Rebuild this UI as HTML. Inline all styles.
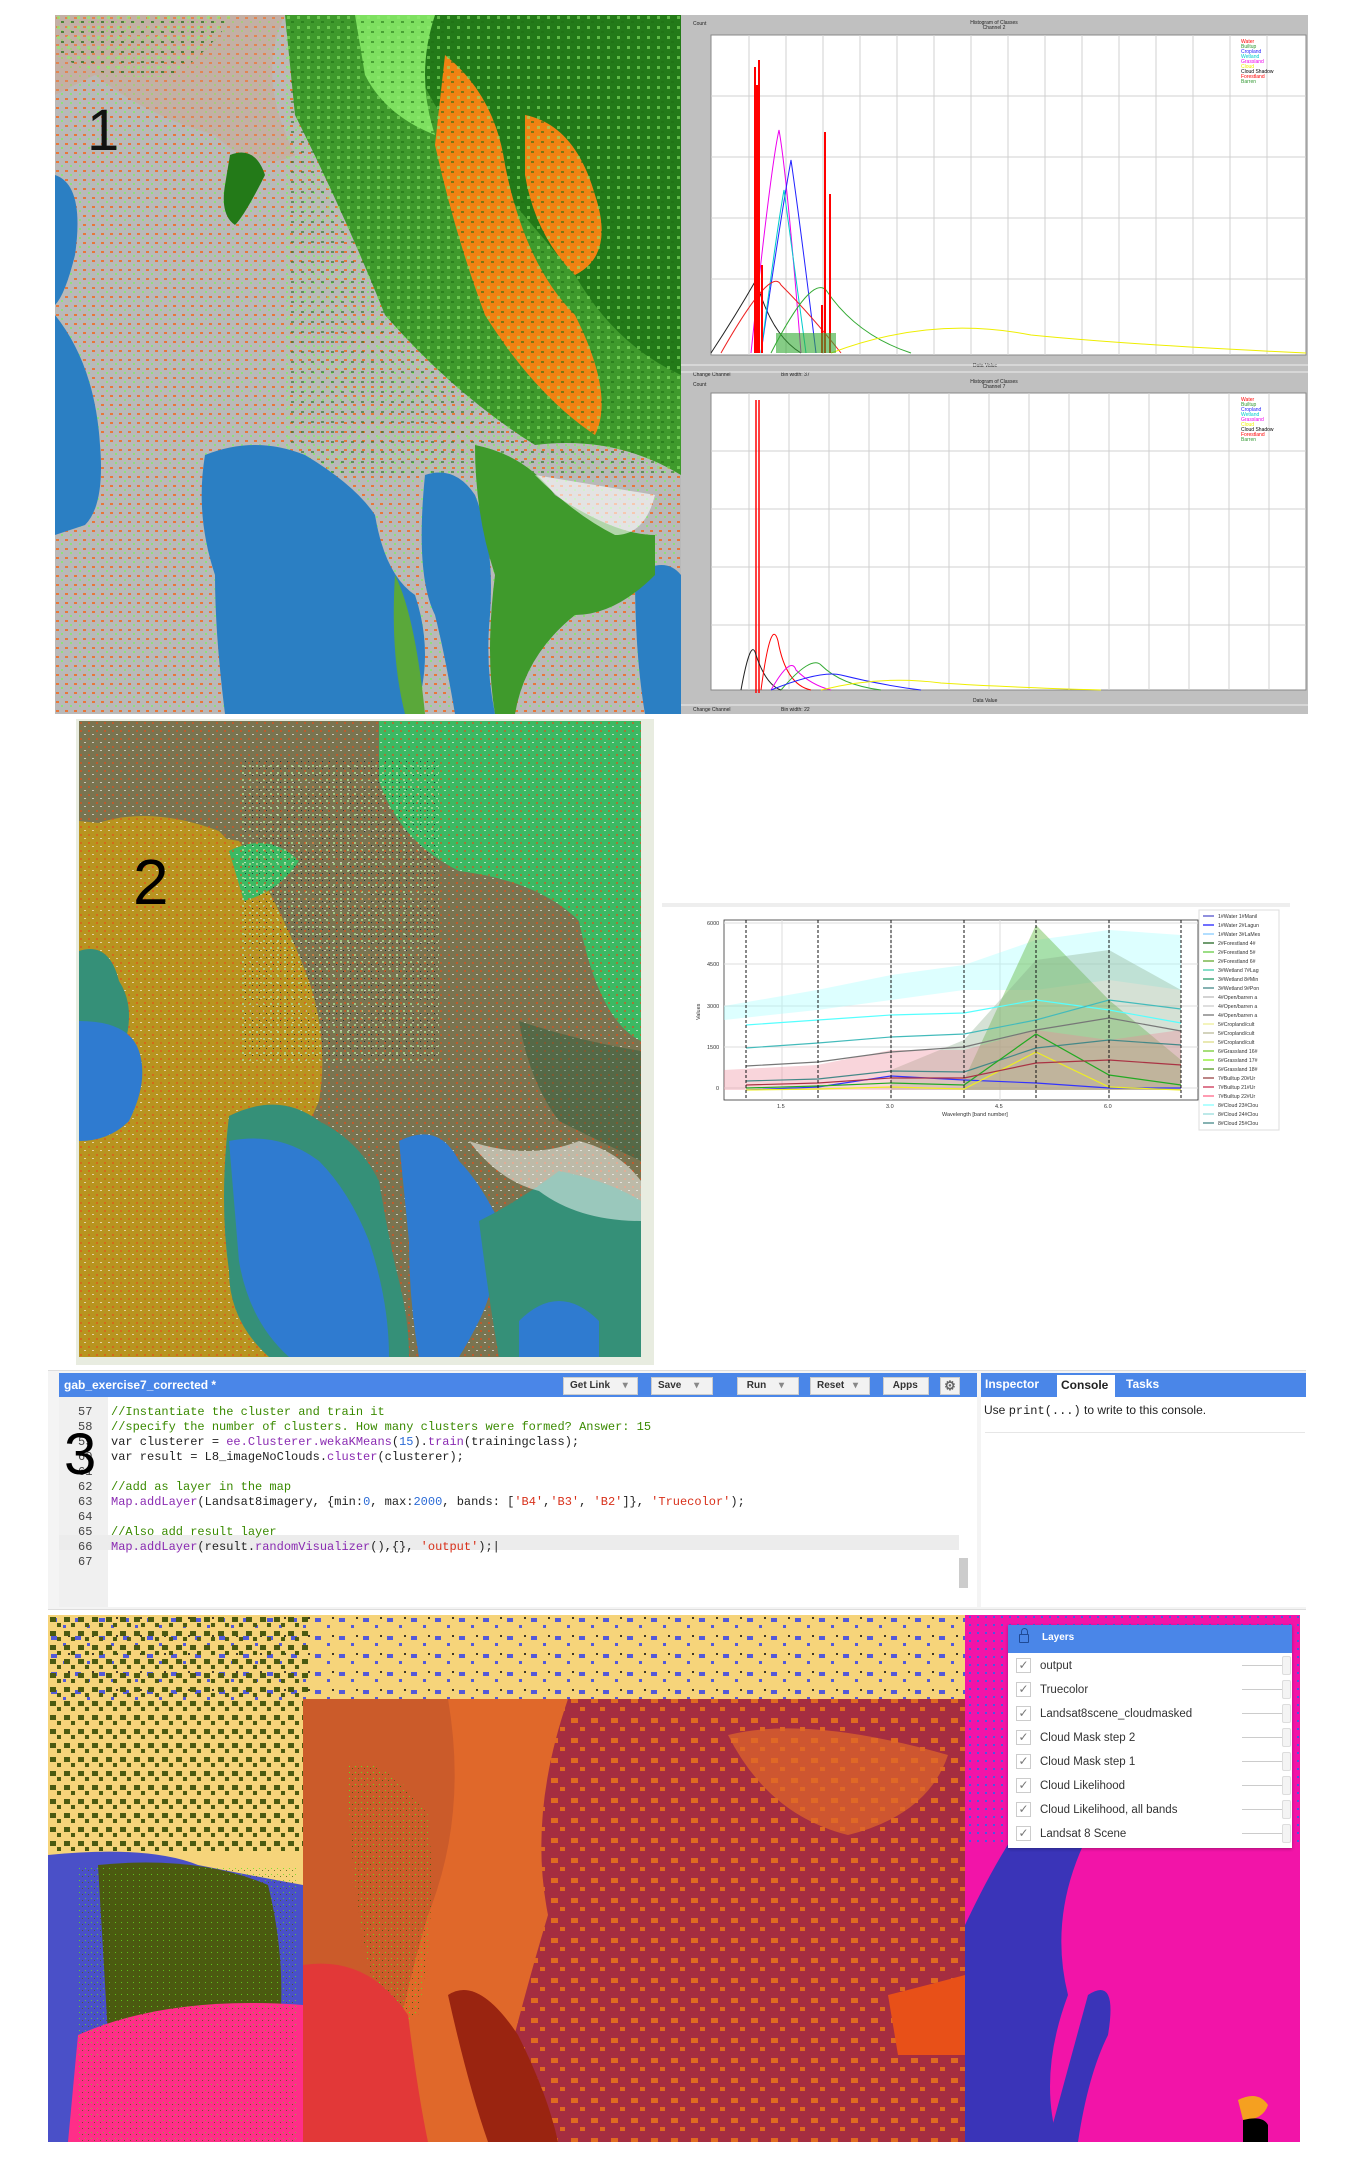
<!DOCTYPE html>
<html><head><meta charset="utf-8"><style>
*{margin:0;padding:0;box-sizing:border-box}
body{width:1354px;height:2158px;background:#fff;position:relative;overflow:hidden;font-family:"Liberation Sans",sans-serif}
.abs{position:absolute}
.code{font-family:"Liberation Mono",monospace;font-size:12px;line-height:15px;white-space:pre}
.cm{color:#3a8a00}.fn{color:#8a2bb2}.num{color:#2c6bd6}.str{color:#d8301a}
.btn{position:absolute;top:4px;height:18px;background:#f2f2f2;border:1px solid #ccc;font-size:10px;font-weight:bold;color:#333;line-height:16px;padding-left:6px}
.lr{position:absolute;left:8px;height:24px;font-size:11.5px;color:#333;line-height:24px;width:276px}
.lr .cb{position:absolute;left:0;top:4px;width:15px;height:15px;border:1px solid #ccc;color:#777;font-size:12px;line-height:13px;text-align:center}
.lr .t{position:absolute;left:24px}
.lr .sl{position:absolute;left:226px;top:11px;width:40px;height:1px;background:#ccc}
.lr .kn{position:absolute;left:266px;top:2px;width:9px;height:19px;border:1px solid #ddd;background:#f4f4f4;border-radius:2px}
</style></head><body>

<!-- MAP 1 -->
<svg class="abs" style="left:55px;top:15px" width="626" height="699" viewBox="0 0 626 699">
<defs>
<pattern id="sp1" width="9" height="9" patternUnits="userSpaceOnUse"><rect x="1" y="2" width="3" height="2" fill="#e8773a"/><rect x="6" y="6" width="2" height="2" fill="#8ee07a"/></pattern>
<pattern id="sp2" width="10" height="10" patternUnits="userSpaceOnUse"><rect x="2" y="1" width="3" height="3" fill="#90ee70"/><rect x="6" y="6" width="3" height="2" fill="#1d6d12"/></pattern>
</defs>
<rect width="626" height="699" fill="#b9b9b9"/>
<rect width="626" height="699" fill="url(#sp1)"/>
<path d="M230 0H626V460Q560 420 480 430Q400 380 330 300Q290 200 240 100Z" fill="#3f9a2c"/>
<path d="M330 0H626V360Q560 330 520 260Q450 180 380 90Z" fill="#237a18"/>
<path d="M390 40Q440 80 450 150Q470 250 520 300Q560 380 540 420Q480 380 430 300Q400 220 380 130Z" fill="#f08212"/>
<path d="M470 100Q520 110 540 180Q560 240 520 260Q480 220 470 160Z" fill="#f08212"/>
<path d="M300 0H380Q360 60 380 120Q330 100 310 60Z" fill="#7ee060"/>
<rect x="230" y="0" width="396" height="460" fill="url(#sp2)" opacity=".55"/>
<path d="M0 0H230Q200 60 240 140Q200 160 160 120Q90 100 40 60L0 80Z" fill="#d8a080" opacity=".35"/>
<path d="M0 0H180Q150 40 120 60Q60 70 0 40Z" fill="url(#sp2)" opacity=".7"/>
<path d="M0 300Q40 350 45 430Q50 490 30 510L0 520Z" fill="#2b7fc3"/>
<path d="M0 160Q30 170 20 240Q10 280 0 290Z" fill="#2b7fc3"/>
<path d="M175 140Q200 130 210 160Q190 200 180 210Q165 200 170 170Z" fill="#237a18"/>
<path d="M150 440Q200 420 250 440Q300 470 320 500Q330 560 360 580Q380 640 360 699H170Q160 620 160 560Q140 500 150 440Z" fill="#2b7fc3"/>
<path d="M370 460Q400 450 420 480Q440 530 435 600Q430 650 440 699H400Q390 640 380 600Q360 560 370 460Z" fill="#2b7fc3"/>
<path d="M580 560Q610 540 626 560V699H590Q580 640 580 560Z" fill="#2b7fc3"/>
<path d="M420 430Q470 440 500 480Q560 520 600 520V560Q560 600 520 600Q470 640 460 699H440Q430 640 440 560Q420 500 420 430Z" fill="#3f9a2c"/>
<path d="M340 560Q360 600 370 699H350Q335 640 340 560Z" fill="#5aa83a"/>
<path d="M480 460Q540 470 600 480Q590 520 560 520Q520 500 480 460Z" fill="#fff" opacity=".6"/>
<text x="32" y="135" font-family="Liberation Sans,sans-serif" font-size="58" fill="#111">1</text>
</svg>

<!-- HISTOGRAMS -->
<div class="abs" style="left:681px;top:15px;width:627px;height:699px;background:#c0c0c0"></div>
<svg class="abs" style="left:681px;top:15px" width="627" height="699" viewBox="0 0 627 699" font-family="Liberation Sans,sans-serif">
<g font-size="5" fill="#222" text-anchor="middle"><text x="313" y="9">Histogram of Classes</text><text x="313" y="14">Channel 2</text>
<text x="313" y="368">Histogram of Classes</text><text x="313" y="373">Channel 7</text></g>
<rect x="30" y="20" width="595" height="320" fill="#fff" stroke="#888"/>
<rect x="30" y="378" width="595" height="297" fill="#fff" stroke="#888"/>
<g stroke="#d0d0d0" stroke-width="1">
<path d="M68 20V340M105 20V340M142 20V340M179 20V340M216 20V340M253 20V340M290 20V340M327 20V340M364 20V340M401 20V340M438 20V340M475 20V340M512 20V340M549 20V340M586 20V340M30 81H625M30 142H625M30 203H625M30 264H625"/>
<path d="M68 378V675M108 378V675M148 378V675M188 378V675M228 378V675M268 378V675M308 378V675M348 378V675M388 378V675M428 378V675M468 378V675M508 378V675M548 378V675M588 378V675M30 436H625M30 494H625M30 552H625M30 610H625"/>
</g>
<g fill="none" stroke-width="1">
<path d="M30 338Q55 300 75 265Q90 320 120 338" stroke="#222"/>
<path d="M70 338Q90 150 98 115Q106 160 120 338" stroke="#e0e"/>
<path d="M80 338Q100 200 110 145Q118 200 135 338" stroke="#22f"/>
<path d="M80 338Q95 220 103 175Q112 240 125 338" stroke="#0cc"/>
<path d="M40 338Q90 250 100 270Q130 300 160 338" stroke="#e22"/>
<path d="M90 338Q130 260 145 275Q175 320 230 338" stroke="#3a3"/>
<path d="M150 338Q250 300 350 320Q450 330 625 338" stroke="#ee0"/>
</g>
<g fill="#f00"><rect x="73" y="52" width="2" height="286"/><rect x="77" y="45" width="2" height="293"/><rect x="75" y="70" width="2" height="268"/><rect x="143" y="117" width="2" height="221"/><rect x="148" y="179" width="2" height="159"/><rect x="140" y="290" width="2" height="48"/><rect x="80" y="250" width="2" height="88"/></g>
<rect x="95" y="318" width="60" height="20" fill="#3a3" opacity=".6"/>
<path d="M75 678V385M78 678V385" stroke="#f00" stroke-width="1.5"/>
<g fill="none" stroke-width="1">
<path d="M60 675Q70 620 75 640Q85 670 100 675" stroke="#222"/>
<path d="M80 675Q90 600 97 626Q105 670 130 675" stroke="#f00"/>
<path d="M90 675Q110 640 115 655Q130 670 150 675" stroke="#e0e"/>
<path d="M100 675Q130 640 140 650Q160 670 200 675" stroke="#3a3"/>
<path d="M90 675Q140 655 160 660Q200 670 240 675" stroke="#22f"/>
<path d="M140 675Q200 660 260 668Q320 672 420 675" stroke="#ee0"/>
</g>
<g font-size="5" fill="#222"><text x="12" y="10">Count</text><text x="12" y="371">Count</text>
<text x="292" y="352">Data Value</text><text x="292" y="687">Data Value</text>
<text x="12" y="361">Change Channel</text><text x="12" y="696">Change Channel</text>
<text x="100" y="361">Bin width: 37</text><text x="100" y="696">Bin width: 22</text></g>
<g font-size="5"><text x="560" y="28" fill="#f00">Water</text><text x="560" y="33" fill="#393">Builtup</text><text x="560" y="38" fill="#22f">Cropland</text><text x="560" y="43" fill="#0cc">Wetland</text><text x="560" y="48" fill="#e0e">Grassland</text><text x="560" y="53" fill="#ee0">Cloud</text><text x="560" y="58" fill="#000">Cloud Shadow</text><text x="560" y="63" fill="#f00">Forestland</text><text x="560" y="68" fill="#393">Barren</text>
<text x="560" y="386" fill="#f00">Water</text><text x="560" y="391" fill="#393">Builtup</text><text x="560" y="396" fill="#22f">Cropland</text><text x="560" y="401" fill="#0cc">Wetland</text><text x="560" y="406" fill="#e0e">Grassland</text><text x="560" y="411" fill="#ee0">Cloud</text><text x="560" y="416" fill="#000">Cloud Shadow</text><text x="560" y="421" fill="#f00">Forestland</text><text x="560" y="426" fill="#393">Barren</text></g>
<path d="M0 350H627M0 357H627M0 690H627" stroke="#eee"/>
</svg>

<!-- MAP 2 -->
<div class="abs" style="left:76px;top:719px;width:578px;height:646px;background:#e8ece0"></div>
<svg class="abs" style="left:79px;top:721px" width="562" height="636" viewBox="0 0 562 636">
<defs><pattern id="sp3" width="8" height="8" patternUnits="userSpaceOnUse"><rect x="1" y="1" width="2" height="2" fill="#e84a18"/><rect x="5" y="5" width="2" height="1" fill="#fff"/></pattern>
<pattern id="sp4" width="7" height="7" patternUnits="userSpaceOnUse"><rect x="2" y="2" width="2" height="2" fill="#a8d890"/><rect x="5" y="5" width="1" height="1" fill="#123"/></pattern></defs>
<rect width="562" height="636" fill="#7a7450"/>
<path d="M0 100Q100 110 160 120Q200 180 230 260Q250 320 240 380Q200 470 160 540Q140 600 200 636H0Z" fill="#b89420"/>
<path d="M0 110Q60 80 140 110Q180 150 200 220L140 250L0 240Z" fill="#b89420"/>
<path d="M300 0H562V320Q520 300 500 200Q460 160 380 150Q320 120 300 60Z" fill="#3cb963"/>
<path d="M150 130Q190 110 220 140Q200 170 165 180Z" fill="#3cb963"/>
<rect x="160" y="40" width="200" height="300" fill="url(#sp4)" opacity=".8"/>
<rect width="562" height="636" fill="url(#sp3)" opacity=".6"/>
<path d="M0 230Q30 220 40 260Q60 290 40 340Q20 360 0 350Z" fill="#359078"/>
<path d="M0 300Q50 300 60 330Q70 360 50 400Q30 420 0 420Z" fill="#2f7bd0"/>
<path d="M150 395Q200 370 240 400Q280 420 300 460Q310 520 320 560Q330 600 330 636H190Q150 600 150 550Q140 480 150 395Z" fill="#359078"/>
<path d="M150 420Q200 410 240 440Q270 470 290 520Q310 580 310 636H210Q170 600 160 540Z" fill="#2f7bd0"/>
<path d="M320 420Q360 400 380 440Q400 460 420 500Q420 560 400 600Q390 620 380 636H340Q330 580 330 520Z" fill="#2f7bd0"/>
<path d="M400 500Q440 480 480 450Q530 460 562 480V636H420Q410 580 400 500Z" fill="#359078"/>
<path d="M440 600Q480 560 520 600V636H440Z" fill="#2f7bd0"/>
<path d="M390 420Q450 440 500 420Q540 430 562 460V500Q500 500 460 470Q420 460 390 420Z" fill="#fff" opacity=".5"/>
<path d="M440 300Q500 320 562 330V440Q520 420 480 400Q450 360 440 300Z" fill="#1f5a3a" opacity=".4"/>
<text x="54" y="183" font-family="Liberation Sans,sans-serif" font-size="64" fill="#000">2</text>
</svg>

<!-- SPECTRAL CHART -->
<div class="abs" style="left:662px;top:903px;width:628px;height:4px;background:#eee"></div>
<svg class="abs" style="left:662px;top:907px" width="628" height="230" viewBox="662 907 628 230" font-family="Liberation Sans,sans-serif">
<rect x="724" y="920" width="474" height="180" fill="#fff" stroke="#333" stroke-width="0.8"/>
<g stroke="#ddd"><path d="M782 920V1100M891 920V1100M1000 920V1100M1109 920V1100M724 923H1198M724 964H1198M724 1006H1198M724 1047H1198M724 1088H1198"/></g>
<path d="M724 1006L817 990L891 975L964 965L1036 940L1109 930L1181 935V990L1109 980L1036 990L964 990L891 1000L817 1010L724 1020Z" fill="#aff" opacity=".4"/>
<path d="M964 1080L1036 925L1109 1000L1181 1060V1090H964Z" fill="#6b4" opacity=".45"/>
<path d="M891 1070L964 1040L1036 960L1109 950L1181 990V1090H891Z" fill="#8a8" opacity=".35"/>
<path d="M724 1070L817 1065L891 1050L964 1050L1036 1030L1109 1040L1181 1030V1090H724Z" fill="#e89" opacity=".35"/>
<g fill="none" stroke-width="1.2">
<path d="M746 1025L818 1020L891 1015L964 1013L1036 1000L1109 1010L1181 1023" stroke="#5ff"/>
<path d="M746 1048L818 1043L891 1037L964 1034L1036 1020L1109 1000L1181 1009" stroke="#4bb"/>
<path d="M746 1066L818 1062L891 1052L964 1047L1036 1030L1109 1018L1181 1031" stroke="#777"/>
<path d="M746 1081L818 1079L891 1071L964 1072L1036 1048L1109 1040L1181 1045" stroke="#488"/>
<path d="M746 1090L818 1087L891 1076L964 1080L1036 1083L1109 1088L1181 1088" stroke="#33f"/>
<path d="M746 1090L818 1089L891 1087L964 1089L1036 1052L1109 1087L1181 1090" stroke="#ee2"/>
<path d="M746 1088L818 1086L891 1083L964 1085L1036 1034L1109 1075L1181 1085" stroke="#2a2"/>
<path d="M746 1085L818 1083L891 1078L964 1078L1036 1063L1109 1060L1181 1065" stroke="#a34"/>
</g>
<g stroke="#111" stroke-dasharray="3,2"><path d="M746 920V1100M818 920V1100M891 920V1100M964 920V1100M1036 920V1100M1109 920V1100M1181 920V1100"/></g>
<g font-size="5.5" fill="#333"><text x="707" y="925">6000</text><text x="707" y="966">4500</text><text x="707" y="1008">3000</text><text x="707" y="1049">1500</text><text x="716" y="1090">0</text>
<text x="777" y="1108">1.5</text><text x="886" y="1108">3.0</text><text x="995" y="1108">4.5</text><text x="1104" y="1108">6.0</text>
<text x="942" y="1116">Wavelength [band number]</text>
<text x="700" y="1020" transform="rotate(-90 700 1020)">Values</text></g>
<rect x="1199" y="910" width="80" height="220" fill="#fff" stroke="#ddd"/>
<g font-size="5.2" fill="#333">
<text x="1218" y="918">1#Water 1#Manil</text><text x="1218" y="927">1#Water 2#Lagun</text><text x="1218" y="936">1#Water 3#LaMes</text><text x="1218" y="945">2#Forestland 4#</text><text x="1218" y="954">2#Forestland 5#</text><text x="1218" y="963">2#Forestland 6#</text><text x="1218" y="972">3#Wetland 7#Lag</text><text x="1218" y="981">3#Wetland 8#Min</text><text x="1218" y="990">3#Wetland 9#Pon</text><text x="1218" y="999">4#Open/barren a</text><text x="1218" y="1008">4#Open/barren a</text><text x="1218" y="1017">4#Open/barren a</text><text x="1218" y="1026">5#Cropland/cult</text><text x="1218" y="1035">5#Cropland/cult</text><text x="1218" y="1044">5#Cropland/cult</text><text x="1218" y="1053">6#Grassland 16#</text><text x="1218" y="1062">6#Grassland 17#</text><text x="1218" y="1071">6#Grassland 18#</text><text x="1218" y="1080">7#Builtup 20#Ur</text><text x="1218" y="1089">7#Builtup 21#Ur</text><text x="1218" y="1098">7#Builtup 22#Ur</text><text x="1218" y="1107">8#Cloud 23#Clou</text><text x="1218" y="1116">8#Cloud 24#Clou</text><text x="1218" y="1125">8#Cloud 25#Clou</text></g>
<g stroke-width="1.3"><path d="M1203 916H1214" stroke="#55c"/><path d="M1203 925H1214" stroke="#22f"/><path d="M1203 934H1214" stroke="#8cf"/><path d="M1203 943H1214" stroke="#262"/><path d="M1203 952H1214" stroke="#6c4"/><path d="M1203 961H1214" stroke="#6a3"/><path d="M1203 970H1214" stroke="#4ca"/><path d="M1203 979H1214" stroke="#296"/><path d="M1203 988H1214" stroke="#488"/><path d="M1203 997H1214" stroke="#bbb"/><path d="M1203 1006H1214" stroke="#ccc"/><path d="M1203 1015H1214" stroke="#777"/><path d="M1203 1024H1214" stroke="#ee9"/><path d="M1203 1033H1214" stroke="#bb9"/><path d="M1203 1042H1214" stroke="#dd8"/><path d="M1203 1051H1214" stroke="#7c3"/><path d="M1203 1060H1214" stroke="#8e2"/><path d="M1203 1069H1214" stroke="#592"/><path d="M1203 1078H1214" stroke="#944"/><path d="M1203 1087H1214" stroke="#c35"/><path d="M1203 1096H1214" stroke="#f68"/><path d="M1203 1105H1214" stroke="#8ff"/><path d="M1203 1114H1214" stroke="#9dd"/><path d="M1203 1123H1214" stroke="#488"/></g>
</svg>

<!-- EDITOR -->
<div class="abs" style="left:48px;top:1370px;width:1258px;height:240px;border-top:1px solid #ddd;border-bottom:1px solid #ddd;background:#f4f4f4"></div>
<div class="abs" style="left:59px;top:1373px;width:918px;height:24px;background:#4a86e8"></div>
<div class="abs" style="left:64px;top:1378px;color:#fff;font-size:12px;font-weight:bold">gab_exercise7_corrected *</div>
<div class="btn" style="left:563px;top:1377px;width:75px">Get Link <span style="color:#888;margin-left:10px">▾</span></div>
<div class="btn" style="left:651px;top:1377px;width:62px">Save <span style="color:#888;margin-left:10px">▾</span></div>
<div class="btn" style="left:737px;top:1377px;width:62px">&nbsp;Run <span style="color:#888;margin-left:10px">▾</span></div>
<div class="btn" style="left:810px;top:1377px;width:60px">Reset <span style="color:#888;margin-left:6px">▾</span></div>
<div class="btn" style="left:883px;top:1377px;width:46px">&nbsp;Apps</div>
<div class="btn" style="left:940px;top:1377px;width:20px;padding:0;text-align:center;font-size:13px;color:#666">⚙</div>
<div class="abs" style="left:59px;top:1397px;width:918px;height:210px;background:#fff"></div>
<div class="abs" style="left:59px;top:1397px;width:49px;height:210px;background:#f0f0f0"></div>
<div class="abs" style="left:59px;top:1535px;width:900px;height:15px;background:#ececec"></div>
<div class="abs" style="left:959px;top:1558px;width:9px;height:30px;background:#ccc"></div>
<div class="abs code" style="left:78px;top:1405px;color:#444;text-align:right">57
58
59
60
61
62
63
64
65
66
67</div>
<div class="abs code" style="left:111px;top:1405px;color:#222"><span class="cm">//Instantiate the cluster and train it</span>
<span class="cm">//specify the number of clusters. How many clusters were formed? Answer: 15</span>
var clusterer = <span class="fn">ee.Clusterer.wekaKMeans</span>(<span class="num">15</span>).<span class="fn">train</span>(trainingclass);
var result = L8_imageNoClouds.<span class="fn">cluster</span>(clusterer);

<span class="cm">//add as layer in the map</span>
<span class="fn">Map.addLayer</span>(Landsat8imagery, {min:<span class="num">0</span>, max:<span class="num">2000</span>, bands: [<span class="str">'B4'</span>,<span class="str">'B3'</span>, <span class="str">'B2'</span>]}, <span class="str">'Truecolor'</span>);

<span class="cm">//Also add result layer</span>
<span class="fn">Map.addLayer</span>(result.<span class="fn">randomVisualizer</span>(),{}, <span class="str">'output'</span>);|</div>
<div class="abs" style="left:64px;top:1425px;font-size:58px;color:#000;line-height:60px">3</div>
<div class="abs" style="left:981px;top:1373px;width:325px;height:24px;background:#4a86e8"></div>
<div class="abs" style="left:985px;top:1377px;font-size:12px;font-weight:bold;color:#fff">Inspector</div>
<div class="abs" style="left:1057px;top:1375px;width:58px;height:22px;background:#fff;font-size:12px;font-weight:bold;color:#222;padding:3px 4px">Console</div>
<div class="abs" style="left:1126px;top:1377px;font-size:12px;font-weight:bold;color:#fff">Tasks</div>
<div class="abs" style="left:981px;top:1397px;width:325px;height:210px;background:#fff"></div>
<div class="abs" style="left:984px;top:1403px;font-size:12px;color:#222">Use <span style="font-family:'Liberation Mono',monospace">print(...)</span> to write to this console.</div>
<div class="abs" style="left:985px;top:1432px;width:320px;height:1px;background:#e6e6e6"></div>

<!-- MAP 3 -->
<svg class="abs" style="left:48px;top:1615px" width="1252" height="527" viewBox="0 0 1252 527">
<defs>
<pattern id="bs" width="24" height="18" patternUnits="userSpaceOnUse"><rect x="3" y="3" width="6" height="4" fill="#2a3af0"/><rect x="15" y="10" width="3" height="3" fill="#2a3af0"/><rect x="20" y="2" width="2" height="2" fill="#111"/></pattern>
<pattern id="ms" width="8" height="8" patternUnits="userSpaceOnUse"><rect x="1" y="1" width="2" height="2" fill="#4a5ae0"/></pattern>
<pattern id="gs" width="6" height="6" patternUnits="userSpaceOnUse"><rect x="1" y="1" width="1" height="1" fill="#60e020"/><rect x="4" y="3" width="1" height="1" fill="#4a6010"/></pattern>
<pattern id="ol" width="14" height="14" patternUnits="userSpaceOnUse"><rect x="2" y="2" width="6" height="5" fill="#4b5a10"/><rect x="9" y="8" width="4" height="4" fill="#4b5a10"/></pattern>
<pattern id="or" width="20" height="20" patternUnits="userSpaceOnUse"><rect x="3" y="3" width="7" height="5" fill="#e06a20"/><rect x="12" y="12" width="5" height="4" fill="#e06a20"/></pattern>
</defs>
<rect width="1252" height="527" fill="#f6d47a"/>
<rect width="1252" height="90" fill="url(#bs)" opacity=".8"/>
<rect x="0" y="0" width="260" height="240" fill="url(#ol)"/>
<path d="M0 240Q100 230 150 250Q200 260 255 270V527H0Z" fill="#4a50c8"/>
<path d="M50 250Q150 240 220 270Q240 350 230 430L120 480L60 420Z" fill="#4b5a10"/>
<path d="M30 420Q120 380 255 390V527H20Z" fill="#ff2e88"/>
<rect x="30" y="250" width="220" height="277" fill="url(#gs)" opacity=".8"/>
<rect x="917" y="0" width="335" height="527" fill="#f214a8"/>
<rect x="917" y="0" width="335" height="230" fill="url(#ms)"/>
<path d="M1000 80Q1060 60 1100 90Q1080 170 1040 220Q1000 300 1020 380Q990 460 1010 527H917V310Q950 240 980 200Q990 140 1000 80Z" fill="#3a34b8"/>
<path d="M1040 380Q1070 360 1060 420Q1040 460 1030 527H1000Z" fill="#3a34b8"/>
<path d="M1190 485Q1210 475 1220 490Q1215 505 1195 505Z" fill="#f5a020"/>
<path d="M1195 505Q1215 500 1220 510V527H1195Z" fill="#000"/>
<rect x="255" y="84" width="662" height="443" fill="#a52d40"/>
<rect x="255" y="84" width="662" height="443" fill="url(#or)"/>
<path d="M255 84H520Q480 200 500 300Q470 400 440 527H255Z" fill="#e0682a"/>
<path d="M255 84H400Q420 200 380 300Q350 400 330 527H255Z" fill="#c6582a" opacity=".8"/>
<path d="M300 150Q340 140 380 200Q390 300 370 400Q340 420 320 350Q300 250 300 150Z" fill="url(#gs)"/>
<path d="M255 350Q320 340 360 400Q370 480 380 527H255Z" fill="#e23838"/>
<path d="M400 380Q430 360 470 420Q500 480 510 527H440Q420 470 400 380Z" fill="#9a2410"/>
<path d="M840 380Q880 370 917 360V440H850Z" fill="#e85018"/>
<path d="M680 120Q760 100 900 140Q880 200 800 220Q720 200 680 120Z" fill="#e0682a" opacity=".7"/>
</svg>

<!-- LAYERS PANEL -->
<div class="abs" style="left:1008px;top:1625px;width:284px;height:223px;background:#fff;box-shadow:0 1px 3px rgba(0,0,0,.3)">
<div style="position:absolute;left:0;top:0;width:284px;height:28px;background:#4a86e8"></div>
<div style="position:absolute;left:11px;top:9px;width:10px;height:9px;border:1.5px solid #1f4a96;border-radius:1px"></div>
<div style="position:absolute;left:13px;top:3px;width:7px;height:7px;border:1.5px solid #1f4a96;border-bottom:none;border-radius:4px 4px 0 0"></div>
<div style="position:absolute;left:34px;top:7px;color:#fff;font-size:10px;font-weight:bold">Layers</div>
<div class="lr" style="top:29px"><span class="cb">✓</span><span class="t">output</span><span class="sl"></span><span class="kn"></span></div>
<div class="lr" style="top:53px"><span class="cb">✓</span><span class="t">Truecolor</span><span class="sl"></span><span class="kn"></span></div>
<div class="lr" style="top:77px"><span class="cb">✓</span><span class="t">Landsat8scene_cloudmasked</span><span class="sl"></span><span class="kn"></span></div>
<div class="lr" style="top:101px"><span class="cb">✓</span><span class="t">Cloud Mask step 2</span><span class="sl"></span><span class="kn"></span></div>
<div class="lr" style="top:125px"><span class="cb">✓</span><span class="t">Cloud Mask step 1</span><span class="sl"></span><span class="kn"></span></div>
<div class="lr" style="top:149px"><span class="cb">✓</span><span class="t">Cloud Likelihood</span><span class="sl"></span><span class="kn"></span></div>
<div class="lr" style="top:173px"><span class="cb">✓</span><span class="t">Cloud Likelihood, all bands</span><span class="sl"></span><span class="kn"></span></div>
<div class="lr" style="top:197px"><span class="cb">✓</span><span class="t">Landsat 8 Scene</span><span class="sl"></span><span class="kn"></span></div>
</div>
</body></html>
